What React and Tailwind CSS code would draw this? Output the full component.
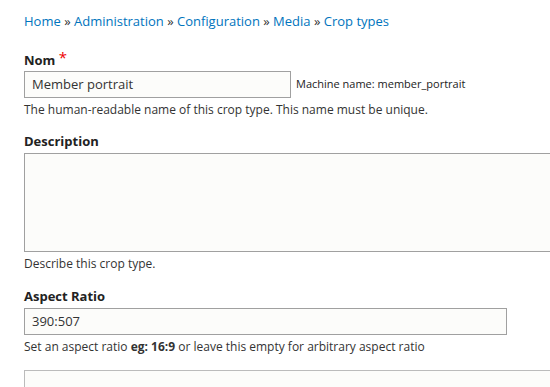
import React from "react"

const crumbs = ["Home", "Administration", "Configuration", "Media", "Crop types"]

const App = () => {
	return (
		<div
			className="w-[550px] h-[387px] overflow-hidden bg-white text-[#333]"
			style={{ fontFamily: '"Open Sans", sans-serif' }}
		>
			<div className="pl-6 pt-3">
				{/* breadcrumb */}
				<div className="text-[13px] leading-[18px] text-[#0074bd]">
					{crumbs.map((c, i) => (
						<span key={c}>
							{i > 0 && <span className="text-[#333]"> » </span>}
							<a href="#">{c}</a>
						</span>
					))}
				</div>

				{/* Nom */}
				<div className="mt-5 text-[13px] leading-[18px] font-bold text-[#222]">
					Nom <span className="text-[#e00] font-normal text-[15px] relative -top-[2px]">*</span>
				</div>
				<div className="mt-[2px] flex items-center">
					<div className="w-[267px] h-[27px] border border-[#a0a0a0] bg-[#fcfcfa] px-[7px] flex items-center text-[13px]">
						Member portrait
					</div>
					<span className="ml-[5px] text-[11px] text-[#222]">Machine name: member_portrait</span>
				</div>
				<div className="mt-1 text-[12px] leading-4">
					The human-readable name of this crop type. This name must be unique.
				</div>

				{/* Description */}
				<div className="mt-[14px] text-[13px] leading-[18px] font-bold text-[#222]">Description</div>
				<div className="mt-[3px] w-[560px] h-[99px] border border-[#a0a0a0] bg-[#fcfcfa]" />
				<div className="mt-1 text-[12px] leading-4">Describe this crop type.</div>

				{/* Aspect ratio */}
				<div className="mt-[15px] text-[13px] leading-[18px] font-bold text-[#222]">Aspect Ratio</div>
				<div className="mt-[3px] w-[483px] h-[27px] border border-[#a0a0a0] bg-[#fcfcfa] px-[7px] flex items-center text-[13px]">
					390:507
				</div>
				<div className="mt-1 text-[12px] leading-4">
					Set an aspect ratio <b>eg: 16:9</b> or leave this empty for arbitrary aspect ratio
				</div>

				{/* soft limit fieldset */}
				<div className="mt-[15px] w-[560px] h-[60px] border border-[#bbb] bg-[#fcfcfa] pt-[14px] pl-[18px]">
					<span className="text-[13px] font-bold uppercase tracking-wide text-[#222]">Soft limit</span>
				</div>
			</div>
		</div>
	)
}

export default App
